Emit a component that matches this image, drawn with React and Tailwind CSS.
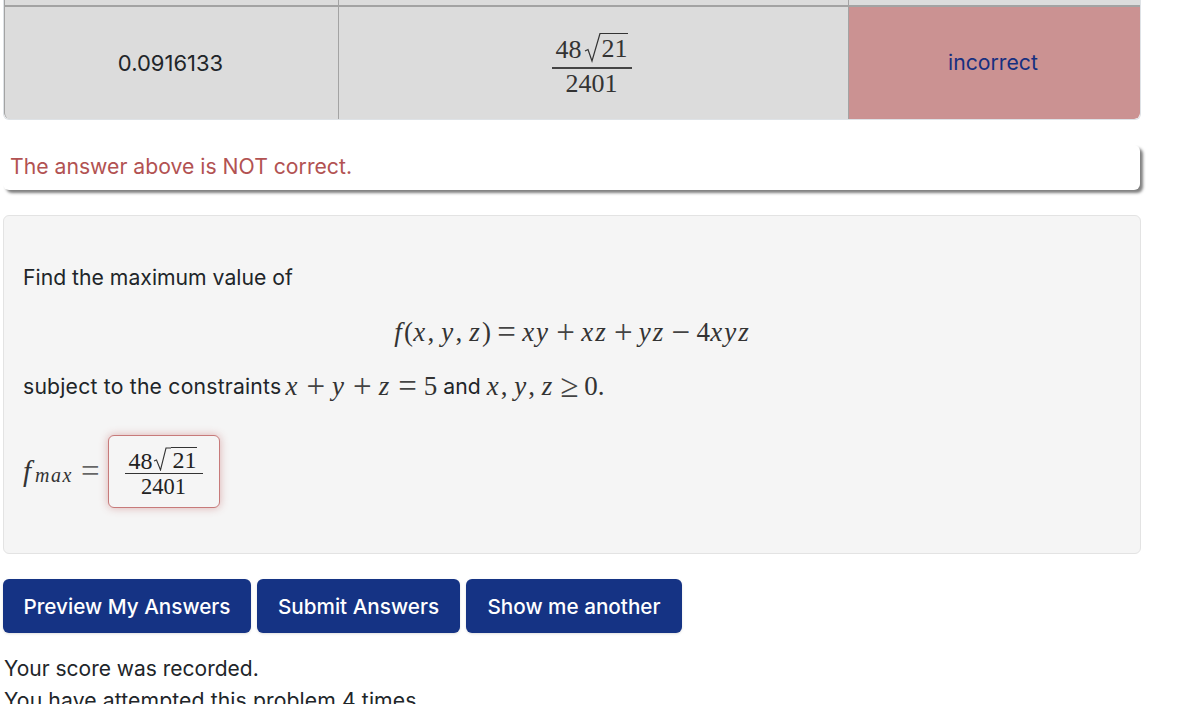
const V = ({ children }) => <i className="font-['Liberation_Serif',serif] tracking-[2px]">{children}</i>;

const Op = ({ children }) => <span className="mx-[6px] text-[33px] leading-none font-light text-[#444]">{children}</span>;

const MATH = "font-['Liberation_Serif',serif] text-[27px] text-[#333] leading-none";

export default function App() {
  return (
    <div className="h-[704px] overflow-hidden bg-white pl-[3px] font-['Inter',sans-serif] text-[21.2px] text-[#212529]">
      <div className="w-[1138px] h-[120px] rounded-b-md border border-t-0 border-[#dee2e6] flex flex-col overflow-hidden">
        <div className="h-[5px] flex bg-[#dcdcdc] shrink-0">
          <div className="w-[335px] border-r border-l border-[#a3a3a3]" />
          <div className="w-[510px] border-r border-[#a3a3a3]" />
          <div className="flex-1" />
        </div>
        <div className="h-[2px] bg-[#a3a3a3] shrink-0" />
        <div className="flex flex-1">
          <div className="w-[335px] flex items-center justify-center bg-[#dcdcdc] border-l border-r border-[#a3a3a3] rounded-bl-md text-[22px] pr-[2px]">
            0.0916133
          </div>
          <div className="w-[510px] flex items-center justify-center bg-[#dcdcdc] border-r border-[#a3a3a3] font-['Liberation_Serif',serif] text-[#333] text-[26px] pr-[4px]">
            <span className="inline-flex flex-col items-center mt-[4px] w-[80px]">
              <span className="h-[35px] flex items-start pt-px">
                <span className="leading-[31px] mt-[1px]">48</span>
                <svg width="20" height="30" viewBox="0 0 20 30" className="shrink-0">
                  <path d="M3 18 L6 16.5 L10 28 L18 0.5 L20 0.5" fill="none" stroke="#333" strokeWidth="1.2" />
                </svg>
                <span className="border-t border-[#333] leading-[29px]">21</span>
              </span>
              <span className="w-full h-[2px] bg-[#444]" />
              <span className="leading-[30px]">2401</span>
            </span>
          </div>
          <div className="flex-1 flex items-center justify-center bg-[#cb9292] text-[#162f80] rounded-br-md pr-[3px]">
            incorrect
          </div>
        </div>
      </div>

      <div className="mt-[25px] w-[1137px] h-[45px] rounded-md bg-white shadow-[3px_3px_3px_rgba(0,0,0,0.5)] flex items-center pl-[7px] pb-[2px] text-[#b25252]">
        The answer above is NOT correct.
      </div>

      <div className="mt-[25px] w-[1138px] h-[339px] rounded-md bg-[#f5f5f5] border border-[#e3e3e3] pl-[19px] pt-[47px]">
        <p className="leading-[28px]">Find the maximum value of</p>
        <div className={`mt-[27px] h-[28px] flex items-center justify-center gap-[0.25px] pr-[18px] ${MATH}`}>
          <V>f</V>(<V>x</V>,&nbsp;<V>y</V>,&nbsp;<V>z</V>)<Op>=</Op><V>xy</V><Op>+</Op><V>xz</V><Op>+</Op><V>yz</V><Op>−</Op>4<V>xyz</V>
        </div>
        <p className="mt-[26px] h-[28px] flex items-center whitespace-nowrap">
          <span className="tracking-[0.2px] pt-px">subject to the constraints</span>
          <span className={`ml-[4px] flex items-center gap-px ${MATH}`}>
            <V>x</V><Op>+</Op><V>y</V><Op>+</Op><V>z</V><Op>=</Op>5
          </span>
          <span className="ml-[6px] pt-px">and</span>
          <span className={`ml-[6px] flex items-center ${MATH}`}>
            <V>x</V>,&nbsp;<V>y</V>,&nbsp;<V>z</V><Op>≥</Op>0.
          </span>
        </p>
        <div className="mt-[35px] flex items-center font-['Liberation_Serif',serif] text-[#333]">
          <span className="text-[29px] leading-none"><V>f</V></span>
          <span className="text-[20px] italic mt-[7px] ml-[2px] tracking-[1.5px]">max</span>
          <span className="text-[33px] font-light ml-[8px] leading-none text-[#666]">=</span>
          <div className="ml-[8px] w-[112px] h-[73px] rounded-md border border-[#c77a7a] bg-[#f5f5f5] shadow-[0_0_8px_rgba(190,90,90,0.45)] flex items-center justify-center text-[24px] text-[#222]">
            <span className="inline-flex flex-col items-center w-[78px] pt-[3px]">
              <span className="h-[26px] flex items-start pr-[2px]">
                <span className="leading-[28px]">48</span>
                <svg width="18" height="24" viewBox="0 0 18 24" className="shrink-0">
                  <path d="M1 14 L3.5 13 L7.5 23 L13 1 L18 1" fill="none" stroke="#333" strokeWidth="1.1" />
                </svg>
                <span className="border-t border-[#333] pl-[2px] leading-[24px] mt-[0.5px]">21</span>
              </span>
              <span className="w-full h-px bg-[#333]" />
              <span className="leading-[26px] text-[22.5px]">2401</span>
            </span>
          </div>
        </div>
      </div>

      <div className="mt-[25px] flex gap-[6px] text-white font-medium text-[20.7px]">
        <button className="h-[54px] w-[248px] pt-[2px] rounded-md bg-[#153384] shadow-sm">Preview My Answers</button>
        <button className="h-[54px] w-[203px] pt-[2px] rounded-md bg-[#153384] shadow-sm">Submit Answers</button>
        <button className="h-[54px] w-[216px] pt-[2px] rounded-md bg-[#153384] shadow-sm">Show me another</button>
      </div>

      <p className="mt-[21px] leading-[30px] text-[21px] ml-px">Your score was recorded.</p>
      <p className="mt-px leading-[30px] tracking-[0.1px] ml-px">You have attempted this problem 4 times.</p>
    </div>
  );
}
